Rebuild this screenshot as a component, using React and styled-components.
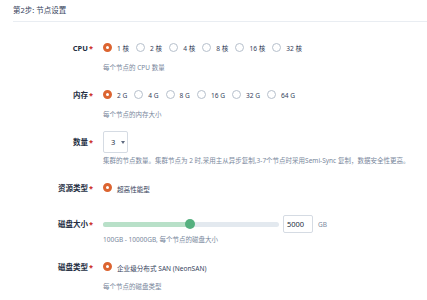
import React, { useState } from "react";
import styled, { createGlobalStyle } from "styled-components";

const GlobalStyle = createGlobalStyle`
  html, body {
    margin: 0;
    padding: 0;
    background: #ffffff;
  }
  body {
    font-family: "Noto Sans", "Noto Sans CJK SC", sans-serif;
    color: #36435c;
  }
`;

const Page = styled.div`
  width: 427px;
  height: 300px;
  overflow: hidden;
  padding: 4px 0 0 13px;
  box-sizing: border-box;
`;

const Header = styled.div`
  font-size: 7.5px;
  line-height: 12px;
  color: #36435c;
  padding-bottom: 5px;
  border-bottom: 1px solid #e9edf2;
`;

const Form = styled.div`
  display: flex;
  flex-direction: column;
  gap: 11px;
  padding-top: 15px;
`;

const Field = styled.div`
  display: grid;
  grid-template-columns: 80px 1fr;
  column-gap: 10px;
  padding-bottom: ${(p) => p.$pad || 0}px;
`;

const Label = styled.div`
  font-size: 7.5px;
  font-weight: 700;
  color: #242e42;
  text-align: right;
  height: 22px;
  line-height: 22px;

  span {
    color: #ca2621;
    margin-left: 1px;
  }
`;

const Control = styled.div`
  display: flex;
  flex-direction: column;
`;

const Row = styled.div`
  display: flex;
  align-items: center;
  height: 22px;
  gap: ${(p) => p.$gap || 7}px;
`;

const Hint = styled.div`
  font-size: 6.5px;
  line-height: 10px;
  min-height: 10px;
  margin-top: ${(p) => (p.$mt !== undefined ? p.$mt : 4)}px;
  color: #79879c;
  white-space: nowrap;
`;

const Option = styled.label`
  display: flex;
  align-items: center;
  gap: 5px;
  font-size: 6.6px;
  color: #36435c;
  cursor: pointer;
  position: relative;
  top: ${(p) => (p.$low ? "1px" : "0")};
`;

const Dot = styled.span`
  width: 9px;
  height: 9px;
  border-radius: 50%;
  box-sizing: border-box;
  flex-shrink: 0;
  position: relative;
  top: ${(p) => (p.$low ? "-2px" : "-1px")};
  background: #ffffff;
  border: ${(p) => (p.$checked ? "3px solid #dc6430" : "1px solid #b6c0cc")};
`;

const Select = styled.div`
  width: 25px;
  height: 22px;
  box-sizing: border-box;
  border: 1px solid #d5dbe3;
  border-radius: 2px;
  display: flex;
  align-items: center;
  padding-left: 7px;
  gap: 6px;
  font-size: 7.5px;
  color: #242e42;

  &::after {
    content: "";
    border-left: 2.5px solid transparent;
    border-right: 2.5px solid transparent;
    border-top: 3px solid #5f6b80;
  }
`;

const Slider = styled.div`
  width: 176px;
  height: 22px;
  display: flex;
  align-items: center;
  position: relative;
`;

const Track = styled.div`
  width: 100%;
  height: 5px;
  border-radius: 3px;
  background: #e3e9ef;
  overflow: hidden;
`;

const Fill = styled.div`
  height: 100%;
  background: #b8e0c8;
`;

const Thumb = styled.div`
  position: absolute;
  top: 50%;
  width: 10px;
  height: 10px;
  margin: -5px 0 0 -5px;
  border-radius: 50%;
  background: #55b07f;
`;

const NumberBox = styled.div`
  width: 30px;
  height: 18px;
  box-sizing: border-box;
  border: 1px solid #d5dbe3;
  border-radius: 2px;
  font-size: 7.5px;
  color: #242e42;
  line-height: 16px;
  padding-left: 3px;
`;

const Unit = styled.span`
  font-size: 6.5px;
  color: #79879c;
  margin-left: 1px;
`;

const RadioGroup = ({ options, value, onChange, low }) => (
  <Row>
    {options.map((o) => (
      <Option key={o} $low={low} onClick={() => onChange && onChange(o)}>
        <Dot $checked={o === value} $low={low} />
        {o}
      </Option>
    ))}
  </Row>
);

const App = () => {
  const [cpu, setCpu] = useState("1 核");
  const [mem, setMem] = useState("2 G");
  const disk = 5000;
  const pct = ((disk - 100) / (10000 - 100)) * 100;

  return (
    <>
      <GlobalStyle />
      <Page>
        <Header>第2步: 节点设置</Header>
        <Form>
          <Field>
            <Label>CPU<span>*</span></Label>
            <Control>
              <RadioGroup
                options={["1 核", "2 核", "4 核", "8 核", "16 核", "32 核"]}
                value={cpu}
                onChange={setCpu}
              />
              <Hint>每个节点的 CPU 数量</Hint>
            </Control>
          </Field>

          <Field>
            <Label>内存<span>*</span></Label>
            <Control>
              <RadioGroup
                options={["2 G", "4 G", "8 G", "16 G", "32 G", "64 G"]}
                value={mem}
                onChange={setMem}
              />
              <Hint>每个节点的内存大小</Hint>
            </Control>
          </Field>

          <Field>
            <Label>数量<span>*</span></Label>
            <Control>
              <Row>
                <Select>3</Select>
              </Row>
              <Hint $mt={3}>
                集群的节点数量。集群节点为 2 时,采用主从异步复制,3-7个节点时采用Semi-Sync 复制，数据安全性更高。
              </Hint>
            </Control>
          </Field>

          <Field $pad={3}>
            <Label>资源类型<span>*</span></Label>
            <Control>
              <RadioGroup options={["超高性能型"]} value="超高性能型" low />
            </Control>
          </Field>

          <Field>
            <Label>磁盘大小<span>*</span></Label>
            <Control>
              <Row $gap={4}>
                <Slider>
                  <Track>
                    <Fill style={{ width: `${pct}%` }} />
                  </Track>
                  <Thumb style={{ left: `${pct}%` }} />
                </Slider>
                <NumberBox>{disk}</NumberBox>
                <Unit>GB</Unit>
              </Row>
              <Hint $mt={0}>100GB - 10000GB, 每个节点的磁盘大小</Hint>
            </Control>
          </Field>

          <Field>
            <Label>磁盘类型<span>*</span></Label>
            <Control>
              <RadioGroup
                options={["企业级分布式 SAN (NeonSAN)"]}
                value="企业级分布式 SAN (NeonSAN)"
                low
              />
              <Hint>每个节点的磁盘类型</Hint>
            </Control>
          </Field>
        </Form>
      </Page>
    </>
  );
};

export default App;
